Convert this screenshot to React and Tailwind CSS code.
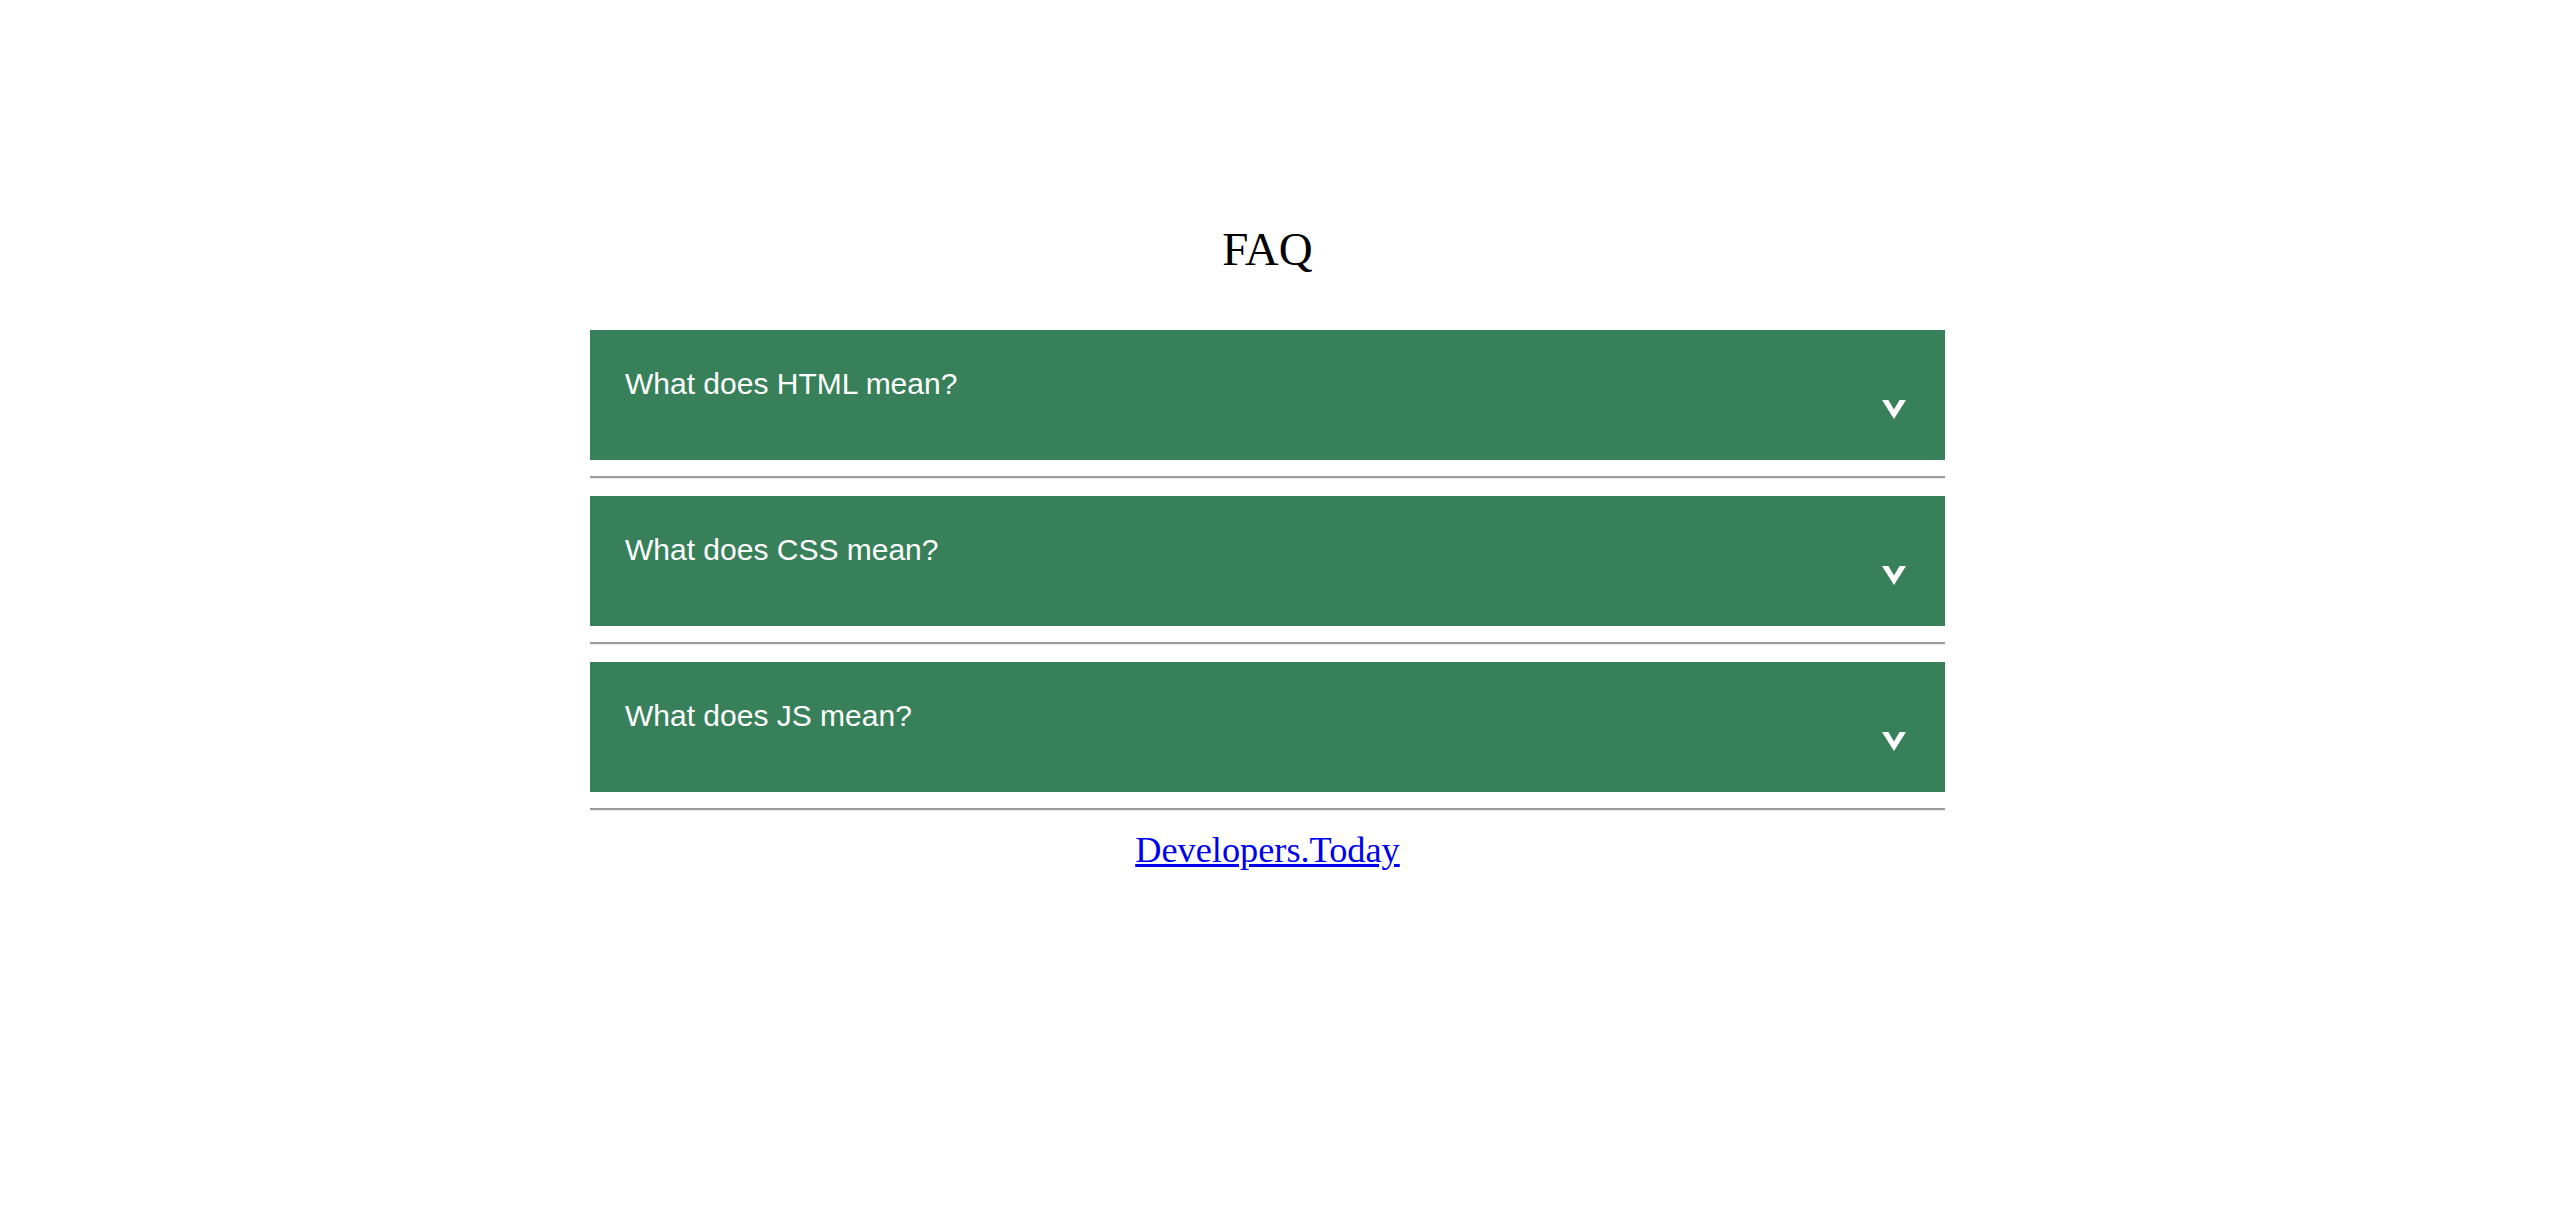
import React from "react";

const questions = ["What does HTML mean?", "What does CSS mean?", "What does JS mean?"];

function Chevron() {
  return (
    <svg width="24" height="19" viewBox="0 0 24 19" className="mt-[39px] mr-[3px] shrink-0">
      <polygon points="0,0 6.4,0 12,9.4 17.6,0 24,0 12,19" fill="#ffffff" />
    </svg>
  );
}

export default function App() {
  return (
    <div className="min-h-screen bg-white pr-[37px]">
      <div className="mx-auto w-[1355px] pt-[222px]">
        <h1
          className="text-center text-[47px] leading-[54px] font-normal text-black mb-[54px]"
          style={{ fontFamily: '"Liberation Serif", "Times New Roman", serif' }}
        >
          FAQ
        </h1>
        {questions.map((q) => (
          <div key={q}>
            <div className="h-[130px] bg-[#37805a] flex items-start justify-between pl-[35px] pr-[36px] pt-[31px]">
              <span
                className="text-white text-[30px] leading-normal"
                style={{ fontFamily: '"Liberation Sans", Arial, sans-serif' }}
              >
                {q}
              </span>
              <Chevron />
            </div>
            <div className="mt-[16px] mb-[17px] border-t-2 border-t-[#9a9a9a] border-b border-b-[#ececec]" />
          </div>
        ))}
        <div className="text-center -mt-[5px]">
          <a
            href="#"
            className="text-[36.3px] leading-normal text-[#0000ee] underline"
            style={{ fontFamily: '"Liberation Serif", "Times New Roman", serif' }}
          >
            Developers.Today
          </a>
        </div>
      </div>
    </div>
  );
}
